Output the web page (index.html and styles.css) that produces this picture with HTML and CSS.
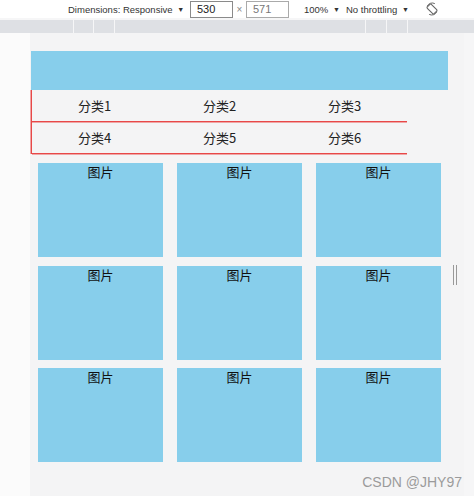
FILE: index.html
```html
<!DOCTYPE html>
<html lang="zh-CN">
<head>
 <meta charset="UTF-8">
 <meta name="viewport" content="width=device-width, initial-scale=1.0">
 <title>分类布局</title>
 <link rel="stylesheet" href="styles.css">
</head>
<body>
   <div class="devbar">
      <span class="dev_dims">Dimensions: Responsive <i>&#9660;</i></span>
      <span class="dev_input">530</span>
      <span class="dev_x">&times;</span>
      <span class="dev_input dim">571</span>
      <span class="dev_zoom">100% <i>&#9660;</i></span>
      <span class="dev_throttle">No throttling <i>&#9660;</i></span>
      <svg class="dev_rotate" width="14" height="14" viewBox="0 0 14 14">
         <path d="M2.2 4.2 A5.6 5.6 0 0 1 9.8 1.6" fill="none" stroke="#666" stroke-width="1"/>
         <path d="M11.8 9.8 A5.6 5.6 0 0 1 4.2 12.4" fill="none" stroke="#666" stroke-width="1"/>
         <rect x="4.2" y="2.2" width="5.6" height="9.6" rx="1" transform="rotate(-45 7 7)" fill="none" stroke="#666" stroke-width="1.1"/>
      </svg>
   </div>
   <div class="rulers">
      <span style="width:73px"></span><span style="width:19px"></span><span style="width:20px"></span><span style="width:250px"></span><span style="width:20px"></span><span style="width:20px"></span><span class="rest"></span>
   </div>

   <div class="stage">
      <div class="gutter"></div>
      <div class="viewport">
         <div class="header"></div>
         <ul class="nav">
            <li>分类1</li>
            <li>分类2</li>
            <li>分类3</li>
            <li>分类4</li>
            <li>分类5</li>
            <li>分类6</li>
         </ul>
         <div class="pics">
            <div class="pic">图片</div>
            <div class="pic">图片</div>
            <div class="pic">图片</div>
            <div class="pic">图片</div>
            <div class="pic">图片</div>
            <div class="pic">图片</div>
            <div class="pic">图片</div>
            <div class="pic">图片</div>
            <div class="pic">图片</div>
         </div>
         <div class="thumb"></div>
      </div>
      <div class="watermark">CSDN @JHY97</div>
   </div>
</body>
</html>
```

FILE: styles.css
```css
body { margin: 0; font-family: "Noto Sans CJK SC", "Noto Sans", sans-serif; background: #f6f6f7; }

.devbar { height: 18px; background: #fff; display: flex; align-items: center; font-family: "Liberation Sans", Arial, sans-serif; font-size: 9.5px; color: #333; white-space: nowrap; }
.devbar i { font-style: normal; font-size: 7px; margin-left: 2px; position: relative; top: -1px; }
.dev_dims { margin-left: 68px; width: 122px; }
.dev_input { box-sizing: border-box; width: 43px; height: 17px; border: 1px solid #8a8a8a; padding-left: 6px; line-height: 15px; font-size: 11px; color: #222; }
.dev_input.dim { border-color: #aaa; color: #777; }
.dev_x { width: 13px; text-align: center; color: #888; font-size: 10px; }
.dev_zoom { margin-left: 15px; width: 42px; }
.dev_throttle { width: 79px; }

.rulers { margin-top: 2px; height: 13px; display: flex; }
.rulers span { background: #dee0e4; height: 100%; margin-right: 1px; }
.rulers span.rest { flex: 1; margin-right: 0; }

.stage { position: relative; display: flex; height: 463px; }
.gutter { width: 30px; background: #fbfbfb; }
.viewport { position: relative; width: 434px; background: #f4f4f5; padding-top: 18px; }

.header { margin-left: 1px; width: 417px; height: 39px; background: #87ceeb; }

.nav { list-style-type: none; margin: 0 0 0 1px; padding: 0; width: 375px; border-left: 1px solid #e84848; box-shadow: -1px 0 0 rgba(232, 72, 72, .45); display: flex; flex-wrap: wrap; }
.nav li { box-sizing: border-box; width: 125px; height: 32px; line-height: 31px; border-bottom: 1px solid #e84848; box-shadow: 0 1px 0 rgba(232, 72, 72, .45); text-align: center; font-size: 13px; color: #222; }

.pics { margin: 9px 0 0 8px; display: grid; grid-template-columns: repeat(3, 125px); column-gap: 14px; row-gap: 8.5px; }
.pic { height: 94px; background: #87ceeb; text-align: center; font-size: 13px; line-height: 17px; color: #111; }

.thumb { position: absolute; left: 423px; top: 232px; width: 2px; height: 20px; border-left: 1px solid #999; border-right: 1px solid #999; }

.watermark { position: absolute; right: 12px; bottom: 6px; font-family: "Liberation Sans", Arial, sans-serif; font-size: 14px; color: #9b9b9b; }
```
